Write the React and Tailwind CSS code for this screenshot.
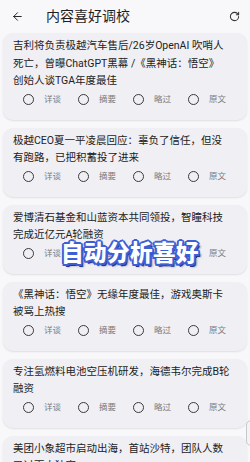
import { ArrowLeft, RotateCw } from 'lucide-react';

const items = [
  ['吉利将负责极越汽车售后/26岁OpenAI 吹哨人', '死亡，曾曝ChatGPT黑幕 /《黑神话：悟空》', '创始人谈TGA年度最佳'],
  ['极越CEO夏一平凌晨回应：辜负了信任，但没', '有跑路，已把积蓄投了进来'],
  ['爱博清石基金和山蓝资本共同领投，智瞳科技', '完成近亿元A轮融资'],
  ['《黑神话：悟空》无缘年度最佳，游戏奥斯卡', '被骂上热搜'],
  ['专注氢燃料电池空压机研发，海德韦尔完成B轮', '融资'],
  ['美团小象超市启动出海，首站沙特，团队人数', '已过百人独家'],
];

const options = ['详谈', '摘要', '略过', '原文'];

function Card({ lines }) {
  return (
    <div className="mx-[3px] rounded-[10px] bg-[#f0eff3] shadow-[0_1px_2px_rgba(0,0,0,0.10)] pt-[4px] pb-[10px]">
      <div className="px-[10px] text-[10.5px] leading-[17.5px] text-[#222]">
        {lines.map((l, i) => (
          <div key={i} className="whitespace-nowrap">{l}</div>
        ))}
      </div>
      <div className="flex h-[20px] items-center pl-[20px]">
        {options.map((o) => (
          <div key={o} className="flex w-[55px] items-center">
            <span className="h-[11px] w-[11px] rounded-full border-[1.5px] border-[#3a3a3a]" />
            <span className="ml-[10px] text-[8.5px] text-[#7a7a7a]">{o}</span>
          </div>
        ))}
      </div>
    </div>
  );
}

export default function App() {
  return (
    <div
      className="relative h-[462px] w-[250px] overflow-hidden bg-[#f8f8fa]"
      style={{ fontFamily: 'Roboto, "Noto Sans CJK SC", sans-serif' }}
    >
      <div className="flex h-[30px] items-center pl-[11px] pr-[10px] pt-[2px]">
        <ArrowLeft size={13} strokeWidth={1.8} className="text-[#222]" />
        <div className="ml-[22px] flex-1 text-[14px] text-[#1e1e1e]">内容喜好调校</div>
        <RotateCw size={11} strokeWidth={2.2} className="text-[#333]" />
      </div>
      <div className="mt-[3px] flex flex-col gap-[8px]">
        {items.map((lines, i) => (
          <Card key={i} lines={lines} />
        ))}
      </div>

      <div
        className="absolute left-[61px] top-[238px] text-[22.5px] font-black leading-[30px] tracking-[0.5px] text-white"
        style={{
          textShadow:
            '2px 0 #3d5fd6, -2px 0 #3d5fd6, 0 2px #3d5fd6, 0 -2px #3d5fd6, 1.5px 1.5px #3d5fd6, -1.5px -1.5px #3d5fd6, 1.5px -1.5px #3d5fd6, -1.5px 1.5px #3d5fd6, 2px 3px #23348a, 3px 3px 2px rgba(20,30,90,0.5)',
        }}
      >
        自动分析喜好
      </div>

      <div className="absolute right-[-6px] top-[420px] h-[26px] w-[10px] rounded-full border border-[#c8c8cc] bg-[#f4f4f6]" />
    </div>
  );
}
